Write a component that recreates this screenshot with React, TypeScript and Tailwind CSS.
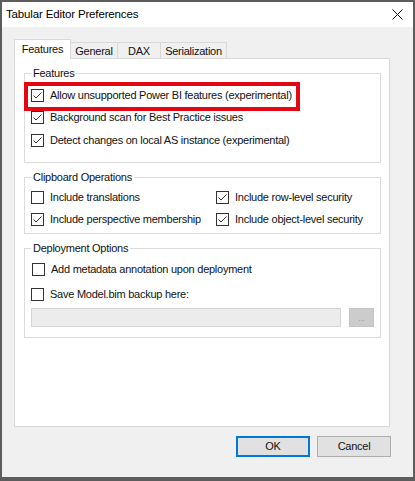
import React from "react";

const font = { fontFamily: '"Liberation Sans", Arial, sans-serif' };

function Box({ checked }: { checked: boolean }) {
  return (
    <span className="w-[13px] h-[13px] border border-[#333333] bg-white flex items-center justify-center shrink-0">
      {checked && (
        <svg width="11" height="11" viewBox="0 0 11 11">
          <polyline points="1.5,5.5 4,8 9.5,2.5" fill="none" stroke="#333333" strokeWidth="1" />
        </svg>
      )}
    </span>
  );
}

function Check({ checked, label, h = "h-[22.5px]" }: { checked: boolean; label: string; h?: string }) {
  return (
    <div className={`flex items-center gap-[6px] ${h}`}>
      <Box checked={checked} />
      <span className="text-[11px] tracking-[-0.25px] text-[#111] leading-none whitespace-nowrap">{label}</span>
    </div>
  );
}

function Group({ title, className, children }: { title: string; className: string; children: React.ReactNode }) {
  return (
    <div className={`relative border border-[#dcdcdc] ${className}`}>
      <span className="absolute -top-[8px] left-[6px] px-[2px] bg-white text-[11px] tracking-[-0.25px] leading-[15px] text-[#111]">{title}</span>
      {children}
    </div>
  );
}

export default function App() {
  return (
    <div className="w-[415px] h-[481px] bg-[#5c5c5c] pt-[2px] pl-[2px]" style={font}>
      <div className="w-[411px] h-[475px] flex flex-col bg-[#f0f0f0]">
        <div className="h-[25px] bg-white flex items-center justify-between pl-[4px] pr-[10px]">
          <span className="text-[11.5px] tracking-[-0.15px] text-black">Tabular Editor Preferences</span>
          <svg width="11" height="11" viewBox="0 0 11 11">
            <path d="M0.5 0.5 L10.5 10.5 M10.5 0.5 L0.5 10.5" stroke="#111" strokeWidth="1" />
          </svg>
        </div>
        <div className="flex-1 flex flex-col pt-[12px] pl-[12px]">
          <div className="flex items-end h-[19px]">
            <div className="relative z-10 -mb-px h-[20px] w-[57px] bg-white border-l border-t border-r border-[#d9d9d9] flex items-center justify-center text-[11px] tracking-[-0.25px] text-[#111]">
              Features
            </div>
            <div className="h-[16px] w-[47px] border-t border-r border-[#d9d9d9] flex items-center justify-center text-[11px] tracking-[-0.25px] text-[#111] pt-[1px]">
              General
            </div>
            <div className="h-[16px] w-[43px] border-t border-r border-[#d9d9d9] flex items-center justify-center text-[11px] tracking-[-0.25px] text-[#111] pt-[1px]">
              DAX
            </div>
            <div className="h-[16px] w-[66px] border-t border-r border-[#d9d9d9] flex items-center justify-center text-[11px] tracking-[-0.25px] text-[#111] pt-[1px]">
              Serialization
            </div>
          </div>
          <div className="w-[376px] h-[369px] bg-white border border-[#d9d9d9] pt-[14px] pl-[9px]">
            <Group title="Features" className="w-[357px] h-[90px] pt-[10px] pl-[6px]">
              <div className="absolute left-[-1px] top-[8px] w-[276px] h-[29px] border-[4px] border-[#e30613]" />
              <Check checked label="Allow unsupported Power BI features (experimental)" />
              <Check checked label="Background scan for Best Practice issues" />
              <Check checked label="Detect changes on local AS instance (experimental)" />
            </Group>
            <Group title="Clipboard Operations" className="mt-[14px] w-[357px] h-[57px] pt-[8px] pl-[6px]">
              <div className="grid grid-cols-[185px_1fr]">
                <Check checked={false} label="Include translations" h="h-[22px]" />
                <Check checked label="Include row-level security" h="h-[22px]" />
                <Check checked label="Include perspective membership" h="h-[22px]" />
                <Check checked label="Include object-level security" h="h-[22px]" />
              </div>
            </Group>
            <Group title="Deployment Options" className="mt-[14px] w-[357px] h-[90px] pt-[8px] pl-[6px]">
              <div className="pl-[1px]">
                <Check checked={false} label="Add metadata annotation upon deployment" h="h-[24px]" />
              </div>
              <Check checked={false} label="Save Model.bim backup here:" h="h-[26px]" />
              <div className="mt-[1px] flex items-center gap-[8px]">
                <div className="w-[310px] h-[19px] bg-[#ececec] border border-[#d4d4d4]" />
                <div className="w-[25px] h-[19px] bg-[#cccccc] border border-[#c4c4c4] flex items-end justify-center text-[8px] text-[#8a8a8a] leading-[14px]">
                  ...
                </div>
              </div>
            </Group>
          </div>
          <div className="mt-[9px] flex gap-[7px] pl-[222px]">
            <div className="w-[74px] h-[21px] bg-[#e1e1e1] border-2 border-[#0078d7] flex items-center justify-center text-[11px] tracking-[-0.25px] text-[#111]">
              OK
            </div>
            <div className="w-[74px] h-[21px] bg-[#e1e1e1] border border-[#adadad] flex items-center justify-center text-[11px] tracking-[-0.25px] text-[#111]">
              Cancel
            </div>
          </div>
        </div>
      </div>
    </div>
  );
}
